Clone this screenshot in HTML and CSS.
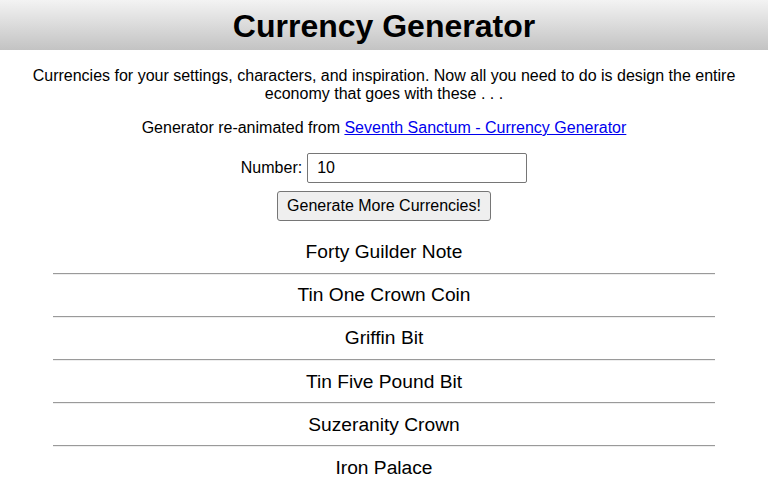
FILE: index.html
```html
<!DOCTYPE html>
<html lang="en">
<head>
    <meta charset="UTF-8">
    <meta name="viewport" content="width=device-width, initial-scale=1.0">
    <title>Currency Generator</title>
    <link rel="stylesheet" href="styles.css">
</head>
<body>
    <header class="banner">
        <h1>Currency Generator</h1>
    </header>

    <p class="intro first">Currencies for your settings, characters, and inspiration. Now all you need to do is design the entire economy that goes with these . . .</p>

    <p class="intro">Generator re-animated from <a href="#">Seventh Sanctum - Currency Generator</a></p>

    <form class="gen-form" onsubmit="return false">
        <div class="row">
            <label for="count">Number:</label>
            <input type="text" id="count" value="10">
        </div>
        <div class="row">
            <button type="submit">Generate More Currencies!</button>
        </div>
    </form>

    <div class="results">
        <div class="item">Forty Guilder Note</div>
        <hr>
        <div class="item">Tin One Crown Coin</div>
        <hr>
        <div class="item">Griffin Bit</div>
        <hr>
        <div class="item">Tin Five Pound Bit</div>
        <hr>
        <div class="item">Suzeranity Crown</div>
        <hr>
        <div class="item">Iron Palace</div>
        <hr>
    </div>
</body>
</html>
```

FILE: styles.css
```css
body {
    font-family: "Liberation Sans", Arial, sans-serif;
    font-size: 16px;
    margin: 0;
    color: #000;
    background: #fff;
}
.banner {
    height: 50px;
    background: linear-gradient(to bottom, #f3f3f3, #c3c3c3);
    text-align: center;
}
.banner h1 {
    margin: 0;
    font-size: 32px;
    line-height: 52px;
    font-weight: bold;
}
.intro {
    text-align: center;
    margin: 16px 28px;
}
.intro.first { margin-top: 17px; }
.intro a { color: #0000ee; }
.gen-form {
    margin: 16px 0 20px;
    text-align: center;
}
.row { display: flex; justify-content: center; align-items: center; gap: 5px; }
.row + .row { margin-top: 8px; }
.gen-form input {
    font-family: inherit;
    font-size: 16px;
    width: 220px;
    box-sizing: border-box;
    padding: 5px 9px;
    border: 1px solid #767676;
    border-radius: 2px;
}
.gen-form button {
    font-family: inherit;
    font-size: 16px;
    padding: 5px 9px;
    background: #efefef;
    border: 1px solid #767676;
    border-radius: 3px;
    color: #000;
}
.results {
    width: 662px;
    margin: 0 auto;
    font-size: 19.2px;
}
.item { text-align: center; }
.results hr {
    margin: 0.5em auto;
    border: none;
    border-top: 1px solid #9a9a9a;
    border-bottom: 1px solid #eeeeee;
}
```
